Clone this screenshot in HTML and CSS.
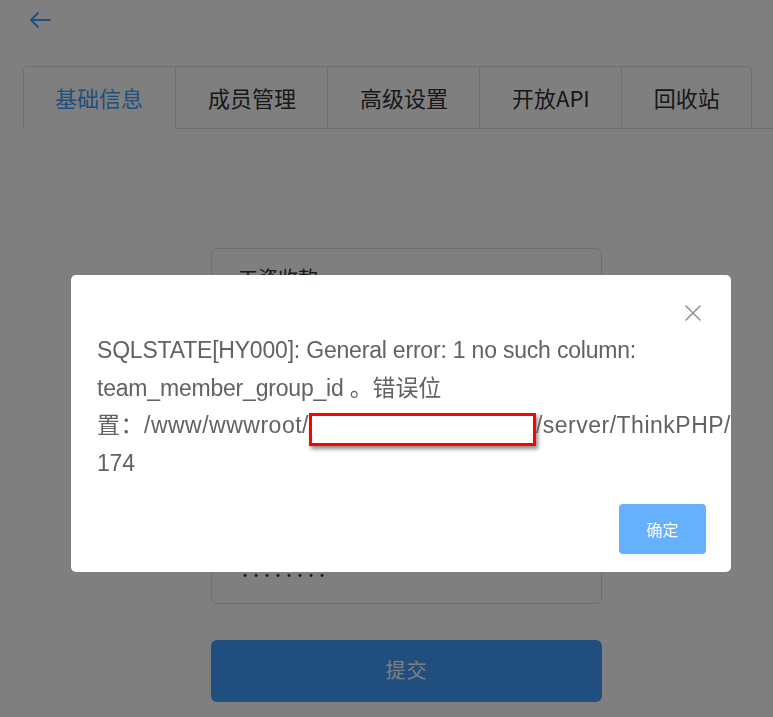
FILE: index.html
```html
<!DOCTYPE html>
<html lang="zh-CN">
<head>
<meta charset="utf-8">
<title>设置</title>
<link rel="stylesheet" href="styles.css">
</head>
<body>
<div class="page">
  <div class="topbar">
    <svg class="back" width="22" height="18" viewBox="0 0 22 18" fill="none" stroke="#409eff" stroke-width="2" stroke-linecap="round" stroke-linejoin="round"><path d="M21 9H2M9 2L2 9l7 7"/></svg>
  </div>
  <div class="tabs-header">
    <div class="tabs-nav">
      <div class="tab active">基础信息</div>
      <div class="tab">成员管理</div>
      <div class="tab">高级设置</div>
      <div class="tab">开放API</div>
      <div class="tab">回收站</div>
    </div>
  </div>
  <form class="form">
    <div class="input">工资收款</div>
    <div class="input pwd">••••••••</div>
    <div class="submit">提交</div>
  </form>
</div>

<div class="mask">
  <div class="dialog">
    <div class="dialog-head">
      <svg class="close" width="16" height="16" viewBox="0 0 16 16" stroke="#909399" stroke-width="1.6" stroke-linecap="round"><path d="M1 1l14 14M15 1L1 15"/></svg>
    </div>
    <div class="dialog-body">
      <div class="line">SQLSTATE[HY000]: General error: 1 no such column:</div>
      <div class="line">team_member_group_id 。错误位</div>
      <div class="line wide">置：/www/wwwroot/<span class="redact"></span>/server/ThinkPHP/</div>
      <div class="line">174</div>
    </div>
    <div class="dialog-foot">
      <button class="ok" type="button">确定</button>
    </div>
  </div>
</div>
</body>
</html>
```

FILE: styles.css
```css
html, body {
  margin: 0;
  padding: 0;
  background: #fff;
  font-family: "Liberation Sans", "Noto Sans CJK SC", sans-serif;
  color: #303133;
  width: 773px;
  height: 717px;
  overflow: hidden;
}
.page {
  display: flex;
  flex-direction: column;
}
.topbar {
  height: 66px;
  display: flex;
  align-items: flex-start;
  padding: 11px 0 0 29px;
  box-sizing: border-box;
}
.back { display: block; }
.tabs-header {
  margin-left: 23px;
  border-bottom: 1px solid #dcdfe6;
  height: 63px;
  box-sizing: border-box;
}
.tabs-nav {
  display: inline-flex;
  border: 1px solid #dcdfe6;
  border-bottom: none;
  border-radius: 5px 5px 0 0;
  height: 63px;
  box-sizing: border-box;
}
.tab {
  padding: 0 31px 0 32px;
  font-size: 22px;
  line-height: 61px;
  color: #303133;
  border-left: 1px solid #dcdfe6;
  border-bottom: 1px solid transparent;
  font-family: "Noto Sans CJK SC", sans-serif;
}
.tab:first-child { border-left: none; padding: 0 32px 0 31px; }
.tab.active {
  color: #409eff;
  border-bottom-color: #fff;
  background: #fff;
}
.form {
  margin: 119px 0 0 211px;
  width: 391px;
  display: flex;
  flex-direction: column;
}
.input {
  height: 54px;
  border: 1px solid #dcdfe6;
  border-radius: 6px;
  padding-left: 26px;
  font-size: 20px;
  line-height: 58px;
  color: #303133;
  font-family: "Noto Sans CJK SC", sans-serif;
  box-sizing: border-box;
  margin-bottom: 246px;
}
.input.pwd {
  height: 56px;
  margin-bottom: 36px;
  letter-spacing: -3px;
  line-height: 50px;
  font-size: 14px;
}
.submit {
  height: 62px;
  border-radius: 6px;
  background: #409eff;
  color: #fff;
  font-size: 20px;
  line-height: 60px;
  text-align: center;
  font-family: "Noto Sans CJK SC", sans-serif;
  letter-spacing: 1px;
}

.mask {
  position: fixed;
  inset: 0;
  background: rgba(0, 0, 0, 0.5);
}
.dialog {
  position: absolute;
  left: 71px;
  top: 275px;
  width: 660px;
  height: 297px;
  background: #fff;
  border-radius: 5px;
  box-sizing: border-box;
  display: flex;
  flex-direction: column;
}
.dialog-head {
  display: flex;
  justify-content: flex-end;
  padding: 30px 30px 0 0;
  height: 57px;
  box-sizing: border-box;
}
.close { display: block; }
.dialog-body {
  padding: 0 0 0 26px;
  font-size: 23px;
  color: #606266;
  letter-spacing: -0.2px;
  font-family: "Liberation Sans", "Noto Sans CJK SC", sans-serif;
}
.line {
  height: 37.7px;
  line-height: 37.7px;
  white-space: nowrap;
  display: flex;
  align-items: center;
}
.line.wide { letter-spacing: 0.5px; }
.redact {
  display: inline-block;
  width: 227px;
  height: 33px;
  box-sizing: border-box;
  border: 3px solid #ff0000;
  background: #fff;
  box-shadow: 2px 3px 4px rgba(0, 0, 0, 0.45);
  margin-top: 6px;
}
.dialog-foot {
  margin-top: auto;
  display: flex;
  justify-content: flex-end;
  padding: 0 25px 18px 0;
}
.ok {
  width: 87px;
  height: 50px;
  border: none;
  border-radius: 4px;
  background: #66b1ff;
  color: #fff;
  font-size: 16px;
  font-family: "Noto Sans CJK SC", sans-serif;
  padding: 0;
}
```
